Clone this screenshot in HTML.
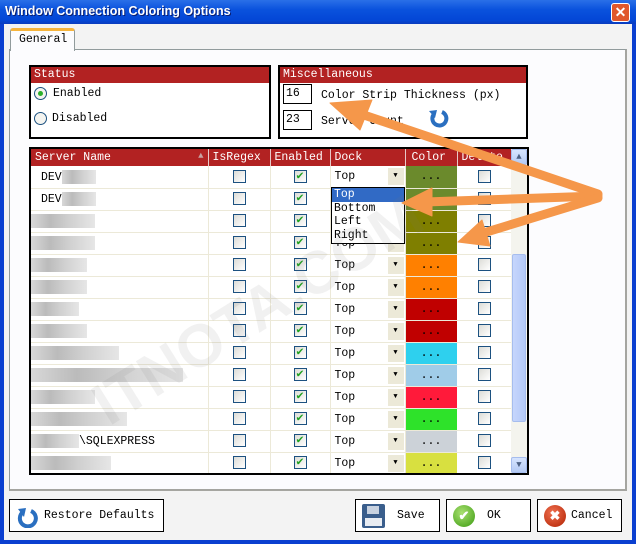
<!DOCTYPE html>
<html><head><meta charset="utf-8"><style>
*{box-sizing:border-box;margin:0;padding:0}
body{width:636px;height:544px;overflow:hidden;background:#0a3fd0;font-family:"Liberation Mono",monospace;font-size:11.5px;color:#000;position:relative}
.abs{position:absolute}
#title{left:0;top:0;width:636px;height:24px;background:linear-gradient(#2a6fe8,#0a52dd 40%,#0346d6 85%,#0a3bbd);}
#title span{position:absolute;left:5px;top:4px;font-family:"Liberation Sans",sans-serif;font-weight:bold;font-size:12.5px;color:#fff;text-shadow:1px 1px #0a1e70}
#close{right:6px;top:3px;width:19px;height:19px;background:#e0582c;border:1px solid #fff;border-radius:3px;color:#fff;font:bold 14px "Liberation Sans",sans-serif;text-align:center;line-height:17px}
#client{left:4px;top:24px;width:628px;height:516px;background:#f3f3f3}
#tab{left:10px;top:28px;width:65px;height:23px;background:#fcfcfe;border:1px solid #919b9c;border-bottom:none;border-top:3px solid #f6b43c;border-radius:3px 3px 0 0;padding:2px 0 0 8px;z-index:2}
#panel{left:9px;top:49px;width:618px;height:442px;background:#fcfcfe;border:1px solid #919b9c;border-right:2px solid #a5a5a0;border-bottom:2px solid #a5a5a0}
.box{border:2px solid #000;background:#fff}
.hdr{background:#b22222;color:#fff;height:16px;padding:1px 0 0 3px}
.txt{border:1px solid #000;width:29px;height:20px;background:#fff;padding:2px 0 0 2px}
table{border-collapse:collapse;table-layout:fixed}
td{height:22px;border-bottom:1px solid #ece9d8;border-right:1px solid #ece9d8;text-align:center;white-space:nowrap;overflow:hidden;position:relative}
th{background:#b22222;color:#fff;font-weight:normal;height:17px;border-right:1px solid #e8c8c8;text-align:left;padding-left:4px;overflow:hidden;white-space:nowrap}
.cb{display:inline-block;width:13px;height:13px;border:1px solid #1c5180;background:linear-gradient(135deg,#dcdcd7,#fff);vertical-align:middle;color:#21a121;font-size:12px;line-height:11px;font-weight:bold}
.dk{text-align:left;padding-left:4px}
.dd{position:absolute;right:1px;top:2px;width:16px;height:17px;background:#ece9d8;font-size:7px;line-height:17px;text-align:center}
.nm{text-align:left;padding-left:0}
.bl{display:inline-block;height:14px;background:linear-gradient(90deg,#d8d8d8,#bbb 30%,#d0d0d0 60%,#e6e6e6);vertical-align:middle}
.btn{border:1px solid #000;background:#fff;height:33px;top:499px}
.btn span{position:absolute;top:9px}
</style></head><body>
<div id="title" class="abs"><span>Window Connection Coloring Options</span></div>
<div id="close" class="abs">✕</div>
<div id="client" class="abs"></div>
<div id="panel" class="abs"></div>
<div id="tab" class="abs">General</div>

<div class="abs box" style="left:29px;top:65px;width:242px;height:74px">
 <div class="hdr">Status</div>
 <div class="abs" style="left:3px;top:20px;width:13px;height:13px;border:1px solid #1c5180;border-radius:50%;background:#f4f4f0"><div style="width:5px;height:5px;border-radius:50%;background:#2bb02b;margin:3px"></div></div>
 <div class="abs" style="left:22px;top:20px">Enabled</div>
 <div class="abs" style="left:3px;top:45px;width:13px;height:13px;border:1px solid #1c5180;border-radius:50%;background:#f4f4f0"></div>
 <div class="abs" style="left:21px;top:45px">Disabled</div>
</div>

<div class="abs box" style="left:278px;top:65px;width:250px;height:74px">
 <div class="hdr">Miscellaneous</div>
 <div class="abs txt" style="left:3px;top:17px">16</div>
 <div class="abs" style="left:41px;top:22px">Color Strip Thickness (px)</div>
 <div class="abs txt" style="left:3px;top:43px">23</div>
 <div class="abs" style="left:41px;top:48px">Server Count</div>
 <svg class="abs" style="left:148px;top:41px" width="22" height="20" viewBox="0 0 22 20"><path d="M6 6 A7 7 0 1 0 14 4" fill="none" stroke="#2a6fc0" stroke-width="4"/><path d="M1 3 L9 2 L7 10 Z" fill="#2a6fc0"/></svg>
</div>

<div class="abs box" style="left:29px;top:147px;width:500px;height:328px;overflow:hidden">
<table style="width:480px">
<colgroup><col style="width:177px"><col style="width:62px"><col style="width:60px"><col style="width:75px"><col style="width:52px"><col style="width:54px"></colgroup>
<tr><th>Server Name<span style="float:right;color:#c8a0a0;margin-right:4px;font-size:9px">▲</span></th><th>IsRegex</th><th>Enabled</th><th>Dock</th><th style="padding-left:6px">Color</th><th>Delete</th></tr>
<tbody id="rows"></tbody>
</table>
<div class="abs" style="left:480px;top:0;width:16px;height:324px;background:#f4f4ee">
 <div style="width:16px;height:16px;background:linear-gradient(#d6e4ff,#b4caf4);border:1px solid #a6bdee;border-radius:2px;color:#4d6185;font-size:9px;text-align:center;line-height:14px">▲</div>
 <div class="abs" style="left:1px;top:105px;width:14px;height:168px;background:linear-gradient(90deg,#c6d6fc,#b4c9f8);border:1px solid #a6bdee;border-radius:2px"></div>
 <div class="abs" style="left:0;top:308px;width:16px;height:16px;background:linear-gradient(#d6e4ff,#b4caf4);border:1px solid #a6bdee;border-radius:2px;color:#4d6185;font-size:9px;text-align:center;line-height:14px">▼</div>
</div>
</div>

<div class="abs" style="left:331px;top:187px;width:74px;height:57px;border:1px solid #000;background:#fff;line-height:13.5px">
 <div style="background:#316ac5;color:#fff;padding-left:2px">Top</div>
 <div style="padding-left:2px">Bottom</div><div style="padding-left:2px">Left</div><div style="padding-left:2px">Right</div>
</div>

<div class="abs" style="left:80px;top:380px;transform:rotate(-32deg);transform-origin:0 0;font:bold 60px 'Liberation Sans',sans-serif;color:rgba(120,120,120,0.10);white-space:nowrap">ITNOTA.COM</div>

<svg class="abs" style="left:0;top:0" width="636" height="544">
<g fill="#f5974a" stroke="#f5974a" stroke-linejoin="round">
<path d="M598 194 L358 113" stroke-width="9" fill="none" stroke-linecap="round"/>
<path d="M330 103 L372 100 L360 130 Z"/>
<path d="M598 196 L425 202" stroke-width="9" fill="none" stroke-linecap="round"/>
<path d="M402 203 L432 188 L432 216 Z"/>
<path d="M598 198 L480 234" stroke-width="9" fill="none" stroke-linecap="round"/>
<path d="M458 242 L482 220 L490 246 Z"/>
</g></svg>

<div class="abs btn" style="left:9px;width:155px">
 <svg class="abs" style="left:6px;top:6px" width="22" height="22" viewBox="0 0 22 22"><path d="M7 6 A8 8 0 1 0 15 5" fill="none" stroke="#2a6fc0" stroke-width="4"/><path d="M2 3 L10 2 L8 11 Z" fill="#2a6fc0"/></svg>
 <span style="left:34px">Restore Defaults</span></div>
<div class="abs btn" style="left:355px;width:85px">
 <div class="abs" style="left:6px;top:4px;width:23px;height:24px;background:#3a5e8c;border-radius:2px"><div style="margin:2px 5px;width:12px;height:8px;background:#c8d2e0"></div><div style="margin:4px 3px 0;width:17px;height:8px;background:#e8ecf2"></div></div>
 <span style="left:41px">Save</span></div>
<div class="abs btn" style="left:446px;width:85px">
 <div class="abs" style="left:6px;top:5px;width:22px;height:22px;border-radius:50%;background:radial-gradient(circle at 40% 35%,#a8e070,#3a9a10);color:#fff;text-align:center;font:bold 13px/22px sans-serif">✔</div>
 <span style="left:40px">OK</span></div>
<div class="abs btn" style="left:537px;width:85px">
 <div class="abs" style="left:6px;top:5px;width:22px;height:22px;border-radius:50%;background:radial-gradient(circle at 40% 35%,#f07050,#b02000);color:#fff;text-align:center;font:bold 13px/22px sans-serif">✖</div>
 <span style="left:33px">Cancel</span></div>

<script>
var cols=["#6b8a2c","#6b8a2c","#7f7f00","#7f7f00","#ff8000","#ff8000","#c00000","#c00000","#2ed0ee","#a0cce8","#ff1a3a","#2ee22a","#ccd2d8","#d8e040"];
var nm=['<span style="margin-left:10px">DEV</span><span class="bl" style="width:34px"></span>','<span style="margin-left:10px">DEV</span><span class="bl" style="width:34px"></span>',
'<span class="bl" style="width:64px"></span>','<span class="bl" style="width:64px"></span>','<span class="bl" style="width:56px"></span>','<span class="bl" style="width:56px"></span>','<span class="bl" style="width:48px"></span>','<span class="bl" style="width:56px"></span>','<span class="bl" style="width:88px"></span>','<span class="bl" style="width:152px"></span>','<span class="bl" style="width:64px"></span>','<span class="bl" style="width:96px"></span>','<span class="bl" style="width:48px"></span>\\SQLEXPRESS','<span class="bl" style="width:80px"></span>'];
var h="";
for(var i=0;i<14;i++){h+='<tr><td class="nm">'+nm[i]+'</td><td><span class="cb"></span></td><td><span class="cb">✔</span></td><td class="dk">Top<span class="dd">▼</span></td><td style="background:'+cols[i]+';border-right-color:#fff">...</td><td><span class="cb"></span></td></tr>';}
document.getElementById("rows").innerHTML=h;
</script>
</body></html>
